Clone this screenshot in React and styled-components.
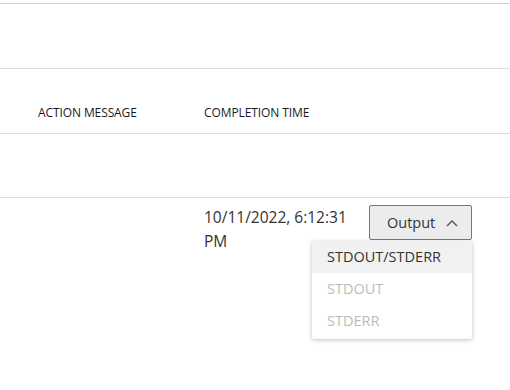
import React from "react";
import styled, { createGlobalStyle } from "styled-components";

const Global = createGlobalStyle`
  html, body { margin: 0; padding: 0; background: #fff; }
  body { font-family: "Open Sans", "Noto Sans", sans-serif; color: #333; }
`;

const Page = styled.div`
  width: 510px;
  height: 390px;
  overflow: hidden;
  padding-top: 3px;
  box-sizing: border-box;
`;

const Row = styled.div`
  display: grid;
  grid-template-columns: 204px 165px 1fr;
  height: ${(p) => p.$h}px;
  border-top: 1px solid ${(p) => p.$line || "#dcdcdc"};
  box-sizing: border-box;
`;

const HeadCell = styled.div`
  font-size: 12px;
  font-weight: 500;
  color: #1a1a1a;
  letter-spacing: -0.1px;
  padding-left: ${(p) => p.$pl || 0}px;
  padding-top: 35px;
`;

const Cell = styled.div`
  font-size: 15.5px;
  line-height: 24px;
  color: #333;
  padding-top: 7px;
  padding-right: 12px;
`;

const ButtonCell = styled.div`
  position: relative;
`;

const Button = styled.button`
  display: flex;
  align-items: center;
  gap: 11px;
  margin-top: 7px;
  width: 103px;
  height: 35px;
  box-sizing: border-box;
  padding: 0 0 0 17px;
  background: #ececec;
  border: 1px solid #777;
  border-radius: 2px;
  font-family: inherit;
  font-size: 14.5px;
  color: #333;
  white-space: nowrap;
  svg { flex-shrink: 0; }
`;

const Menu = styled.div`
  position: absolute;
  top: 43px;
  left: -57px;
  width: 160px;
  background: #fff;
  border-radius: 2px;
  box-shadow: 0 1px 4px rgba(0, 0, 0, 0.25);
  padding: 0 0 2px;
  z-index: 2;
`;

const Item = styled.div`
  height: 32px;
  line-height: 32px;
  padding-left: 15px;
  font-size: 14.5px;
  color: ${(p) => (p.$disabled ? "#bbb" : "#333")};
  background: ${(p) => (p.$active ? "#f1f1f1" : "transparent")};
`;

const Chevron = () => (
  <svg width="12" height="8" viewBox="0 0 12 8" fill="none">
    <path d="M1 7 L6 2 L11 7" stroke="#555" strokeWidth="1.4" />
  </svg>
);

export default function App() {
  return (
    <>
      <Global />
      <Page>
        <Row $h={65} $line="#cfcfcf" />
        <Row $h={65}>
          <HeadCell $pl={38}>ACTION MESSAGE</HeadCell>
          <HeadCell>COMPLETION TIME</HeadCell>
          <div />
        </Row>
        <Row $h={64} />
        <Row $h={200}>
          <div />
          <Cell>10/11/2022, 6:12:31 PM</Cell>
          <ButtonCell>
            <Button>
              <span>Output</span>
              <Chevron />
            </Button>
            <Menu>
              <Item $active>STDOUT/STDERR</Item>
              <Item $disabled>STDOUT</Item>
              <Item $disabled>STDERR</Item>
            </Menu>
          </ButtonCell>
        </Row>
      </Page>
    </>
  );
}
